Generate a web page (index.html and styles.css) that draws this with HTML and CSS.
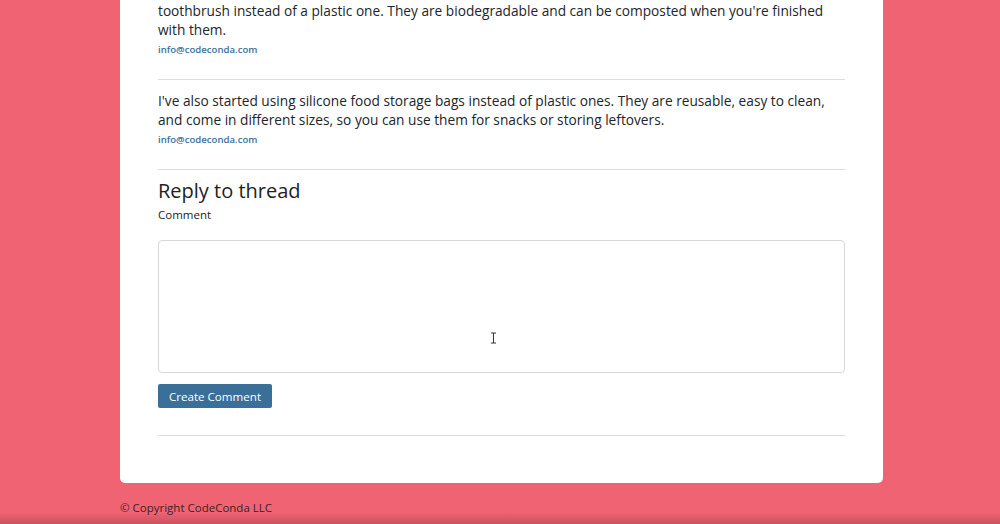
FILE: index.html
```html
<!DOCTYPE html>
<html lang="en">
<head>
<meta charset="utf-8">
<title>Thread</title>
<link rel="stylesheet" href="styles.css">
</head>
<body>
<main class="card">
  <article class="post">
    <p class="post-text">toothbrush instead of a plastic one. They are biodegradable and can be composted when you're finished with them.</p>
    <a class="post-author" href="#">info@codeconda.com</a>
  </article>
  <article class="post">
    <p class="post-text">I've also started using silicone food storage bags instead of plastic ones. They are reusable, easy to clean, and come in different sizes, so you can use them for snacks or storing leftovers.</p>
    <a class="post-author" href="#">info@codeconda.com</a>
  </article>
  <section class="reply">
    <h2 class="reply-title">Reply to thread</h2>
    <label class="reply-label" for="comment">Comment</label>
    <div class="textarea-wrap">
      <textarea id="comment" class="reply-input"></textarea>
      <svg class="cursor" width="7" height="12" viewBox="0 0 7 12"><path d="M1 1h5M3.5 1v10M1 11h5" stroke="#fff" stroke-width="2.4" fill="none"/><path d="M1 1h5M3.5 1v10M1 11h5" stroke="#333" stroke-width="1" fill="none"/></svg>
    </div>
    <button class="btn" type="button">Create Comment</button>
  </section>
</main>
<footer class="footer">© Copyright CodeConda LLC</footer>
</body>
</html>
```
FILE: styles.css
```css
* { box-sizing: border-box; }
html { background: #f06373; }
body {
  margin: 0;
  min-height: 524px;
  font-family: "Open Sans", "DejaVu Sans", sans-serif;
  color: #212529;
  background: linear-gradient(to bottom, #f06373 0, #f06373 512px, #c9525f 524px);
}
.card {
  width: 763px;
  margin: 0 0 0 120px;
  background: #fff;
  border-radius: 0 0 5px 5px;
  padding: 0 38px 47px;
}
.post {
  padding-bottom: 20.5px;
  border-bottom: 1px solid #dcdcdc;
  margin-bottom: 10.5px;
}
.post-text {
  margin: 0 0 3.5px;
  font-size: 13.7px;
  line-height: 19px;
  padding-top: 0.5px;
  color: #212529;
}
.post-author {
  display: block;
  font-size: 9.6px;
  font-weight: 600;
  color: #3a6f98;
  text-decoration: none;
  line-height: 16px;
}
.reply {
  padding-bottom: 27px;
  border-bottom: 1px solid #dcdcdc;
}
.reply-title {
  margin: 0;
  font-weight: 400;
  font-size: 20px;
  line-height: 22px;
  color: #222;
}
.reply-label {
  display: block;
  font-size: 11.5px;
  line-height: 16px;
  margin: 5px 0 17px;
  color: #222;
}
.textarea-wrap { position: relative; }
.reply-input {
  display: block;
  width: 100%;
  height: 133px;
  border: 1px solid #d8d8d8;
  border-radius: 4px;
  resize: none;
  margin: 0;
}
.cursor { position: absolute; left: 332px; top: 92px; }
.btn {
  margin-top: 11px;
  width: 114px;
  height: 24px;
  padding: 0;
  border: 0;
  border-radius: 2px;
  background: #3a6f98;
  color: #fff;
  font-family: inherit;
  font-size: 11.6px;
}
.footer {
  padding: 17px 0 0 120px;
  font-size: 11.5px;
  color: #3b2326;
  line-height: 16px;
}
```
